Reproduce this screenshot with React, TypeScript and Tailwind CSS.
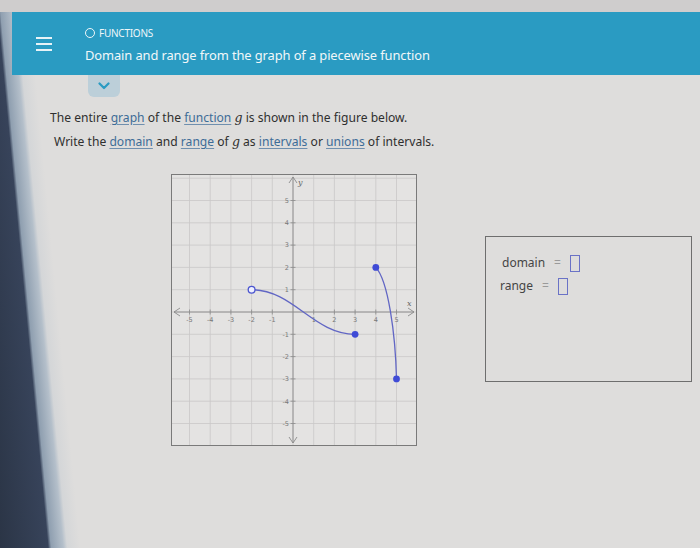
import React from 'react';

// graph geometry: origin + unit size inside the svg
const OX = 122;
const OY = 138;
const SX = 20.7;
const SY = 22.3;
const px = (u: number) => OX + u * SX;
const py = (v: number) => OY - v * SY;

function Graph() {
  const xs = [-5, -4, -3, -2, -1, 0, 1, 2, 3, 4, 5];
  const ys = [-5, -4, -3, -2, -1, 0, 1, 2, 3, 4, 5, 6];
  const curve1 = `M${px(-2)},${py(1)} C${px(0)},${py(1)} ${px(1)},${py(-1)} ${px(3)},${py(-1)}`;
  const curve2 = `M${px(4)},${py(2)} C${px(4.6)},${py(1.4)} ${px(4.95)},${py(-1)} ${px(5)},${py(-3)}`;

  return (
    <svg width="246" height="272" viewBox="0 0 246 272" className="block shrink-0">
      <rect x="0" y="0" width="246" height="272" fill="#e4e3e2" />
      {xs.map((u) => (
        <line key={'gx' + u} x1={px(u)} y1={0} x2={px(u)} y2={272} stroke="#c9c8c8" strokeWidth="0.8" />
      ))}
      {ys.map((v) => (
        <line key={'gy' + v} x1={0} y1={py(v)} x2={246} y2={py(v)} stroke="#c9c8c8" strokeWidth="0.8" />
      ))}
      <rect x="0.5" y="0.5" width="245" height="271" fill="none" stroke="#7a7a7a" strokeWidth="1" />

      {/* axes */}
      <line x1="3" y1={OY} x2="243" y2={OY} stroke="#8a8a8a" strokeWidth="0.9" />
      <line x1={OX} y1="3" x2={OX} y2="269" stroke="#8a8a8a" strokeWidth="0.9" />
      <path d={`M9,${OY - 4} L3,${OY} L9,${OY + 4}`} fill="none" stroke="#8a8a8a" strokeWidth="0.9" />
      <path d={`M237,${OY - 4} L243,${OY} L237,${OY + 4}`} fill="none" stroke="#8a8a8a" strokeWidth="0.9" />
      <path d={`M${OX - 4},9 L${OX},3 L${OX + 4},9`} fill="none" stroke="#8a8a8a" strokeWidth="0.9" />
      <path d={`M${OX - 4},263 L${OX},269 L${OX + 4},263`} fill="none" stroke="#8a8a8a" strokeWidth="0.9" />
      <text x="236" y={OY - 6} fontSize="8" fontStyle="italic" fill="#666" fontFamily="'DejaVu Serif', serif">x</text>
      <text x={OX + 5} y="11" fontSize="8" fontStyle="italic" fill="#666" fontFamily="'DejaVu Serif', serif">y</text>

      {xs.filter((u) => u !== 0).map((u) => (
        <g key={'tx' + u}>
          <line x1={px(u)} y1={OY - 2.5} x2={px(u)} y2={OY + 2.5} stroke="#8a8a8a" strokeWidth="0.8" />
          <text x={px(u)} y={OY + 10} fontSize="6.5" fill="#777" textAnchor="middle" fontFamily="'DejaVu Sans', sans-serif">{u}</text>
        </g>
      ))}
      {[-5, -4, -3, -2, -1, 1, 2, 3, 4, 5].map((v) => (
        <g key={'ty' + v}>
          <line x1={OX - 2.5} y1={py(v)} x2={OX + 2.5} y2={py(v)} stroke="#8a8a8a" strokeWidth="0.8" />
          <text x={OX - 4} y={py(v) + 2.3} fontSize="6.5" fill="#777" textAnchor="end" fontFamily="'DejaVu Sans', sans-serif">{v}</text>
        </g>
      ))}

      {/* the function */}
      <path d={curve1} fill="none" stroke="#6166c4" strokeWidth="1.3" />
      <path d={curve2} fill="none" stroke="#6166c4" strokeWidth="1.3" />
      <circle cx={px(-2)} cy={py(1)} r="3.4" fill="#eef0ff" stroke="#4b55d0" strokeWidth="1.3" />
      <circle cx={px(3)} cy={py(-1)} r="3.4" fill="#3f4bd6" />
      <circle cx={px(4)} cy={py(2)} r="3.4" fill="#3f4bd6" />
      <circle cx={px(5)} cy={py(-3)} r="3.4" fill="#3f4bd6" />
    </svg>
  );
}

function Term({ children }: { children: React.ReactNode }) {
  return <span className="text-[#3d6c97] underline decoration-[#6f8fae] underline-offset-2">{children}</span>;
}

function G() {
  return <span className="italic font-['DejaVu_Serif',serif] text-[12.5px]">g</span>;
}

export default function App() {
  return (
    <div className="w-[700px] h-[548px] overflow-hidden flex flex-col font-['Noto_Sans',sans-serif] bg-[linear-gradient(84.6deg,#2b3546_0px,#37435a_48px,#8f9fb0_51px,#b4bfca_63px,#d4d6d8_67px,#dedddc_80px)]">
      {/* top strip */}
      <div className="h-[12px] shrink-0 bg-[#cfcdcd]" />

      {/* header */}
      <div className="ml-[12px] h-[63px] shrink-0 bg-[#2a9bc2] flex items-center">
        <div className="w-[16px] ml-[24px] flex flex-col gap-[4px]">
          <div className="h-[2px] bg-[#e7f3f7]" />
          <div className="h-[2px] bg-[#e7f3f7]" />
          <div className="h-[2px] bg-[#e7f3f7]" />
        </div>
        <div className="ml-[33px] flex flex-col pt-[2px]">
          <div className="flex items-center gap-[4px] text-[10px] leading-[12px] text-[#eef6f9] tracking-tight">
            <span className="w-[10px] h-[10px] rounded-full border-[1.5px] border-[#eef6f9]" />
            FUNCTIONS
          </div>
          <div className="mt-[8px] text-[12.9px] leading-[16px] text-[#f1f7f9] tracking-[-0.1px]">
            Domain and range from the graph of a piecewise function
          </div>
        </div>
      </div>

      {/* chevron tab */}
      <div className="ml-[88px] w-[32px] h-[22px] shrink-0 bg-[#bccfd9] rounded-b-md flex items-center justify-center">
        <svg width="12" height="8" viewBox="0 0 12 8">
          <path d="M1.5,1.5 L6,6 L10.5,1.5" fill="none" stroke="#2a9bc2" strokeWidth="2.2" strokeLinecap="round" strokeLinejoin="round" />
        </svg>
      </div>

      {/* problem text */}
      <div className="ml-[50px] mt-[9px] text-[12.1px] leading-[24px] text-[#2f2f2f]">
        <p>
          The entire <Term>graph</Term> of the <Term>function</Term> <G /> is shown in the figure below.
        </p>
        <p className="ml-[4px]">
          Write the <Term>domain</Term> and <Term>range</Term> of <G /> as <Term>intervals</Term> or{' '}
          <Term>unions</Term> of intervals.
        </p>
      </div>

      {/* graph + answer */}
      <div className="flex mt-[20px]">
        <div className="ml-[171px]">
          <Graph />
        </div>
        <div className="ml-[68px] mt-[62px] w-[207px] h-[146px] border border-[#6e6e6e] pt-[16px] pl-[16px] text-[12px] text-[#454545]">
          <div className="flex items-center h-[20px]">
            <span>domain</span>
            <span className="ml-[9px] text-[#9a9a9a]">=</span>
            <span className="ml-[9px] w-[10px] h-[17px] border-[1.5px] border-[#6a72c6]" />
          </div>
          <div className="flex items-center h-[20px] mt-[3px] -ml-[2px]">
            <span>range</span>
            <span className="ml-[9px] text-[#9a9a9a]">=</span>
            <span className="ml-[9px] w-[10px] h-[17px] border-[1.5px] border-[#6a72c6]" />
          </div>
        </div>
      </div>
    </div>
  );
}
